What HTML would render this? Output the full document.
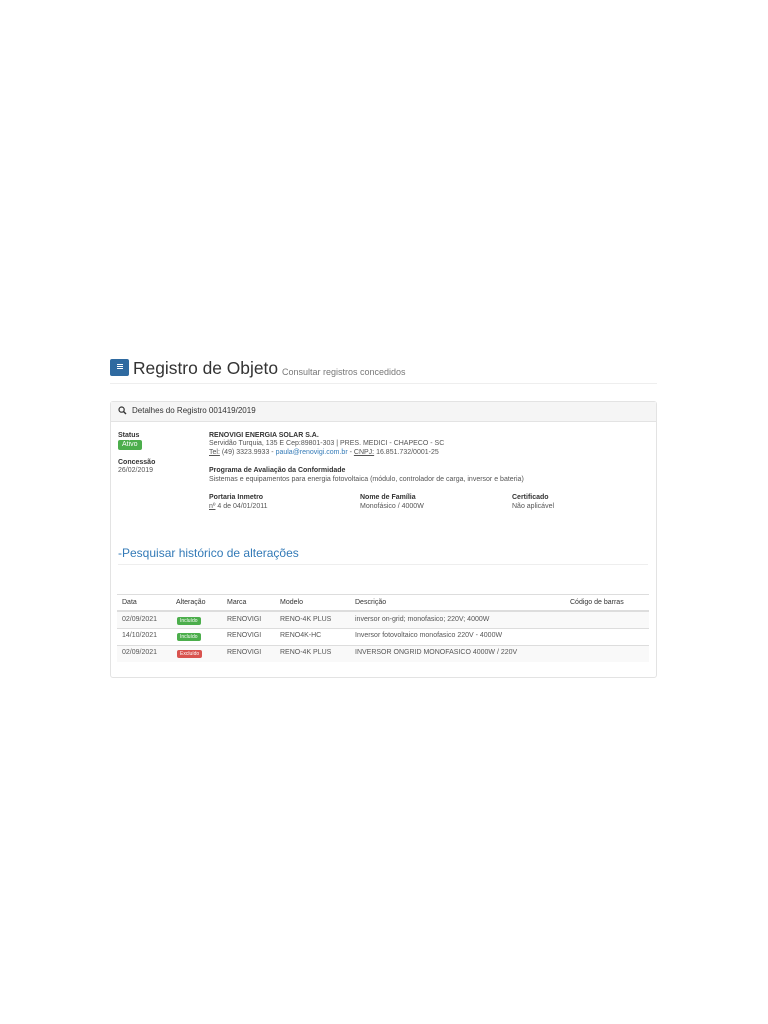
<!DOCTYPE html>
<html><head><meta charset="utf-8"><style>
body{margin:0;width:768px;height:1024px;background:#fff;font-family:"Liberation Sans",sans-serif;position:relative;overflow:hidden;color:#333}
.a{position:absolute;white-space:nowrap}
.s{font-size:7px;color:#555}
.b{font-size:7px;font-weight:bold;color:#333}
.lab{font-size:6px;color:#fff;border-radius:2px;padding:0 3px;line-height:8px}
</style></head><body>
<div class="a" style="left:110px;top:359px;width:19px;height:17px;background:#2f6aa0;border-radius:2px"></div>
<div class="a" style="left:117px;top:364px;width:6px;height:1px;background:#fff;box-shadow:0 2px 0 #fff,0 4px 0 #fff"></div>
<div class="a" style="left:133px;top:358px;font-size:17.4px;color:#333">Registro de Objeto</div>
<div class="a" style="left:282px;top:367px;font-size:9px;color:#777">Consultar registros concedidos</div>
<div class="a" style="left:110px;top:383px;width:547px;height:1px;background:#eee"></div>

<div class="a" style="left:110px;top:401px;width:545px;height:275px;border:1px solid #e3e3e3;border-radius:3px"></div>
<div class="a" style="left:111px;top:402px;width:545px;height:19px;background:#f5f5f5;border-bottom:1px solid #e3e3e3"></div>
<svg class="a" style="left:118px;top:406px" width="9" height="9" viewBox="0 0 9 9"><circle cx="3.6" cy="3.6" r="2.6" fill="none" stroke="#333" stroke-width="1.2"/><path d="M5.5 5.5L8 8" stroke="#333" stroke-width="1.4"/></svg>
<div class="a" style="left:132px;top:406px;font-size:8px;color:#333">Detalhes do Registro 001419/2019</div>

<div class="a b" style="left:118px;top:432px">Status</div>
<div class="a lab" style="left:118px;top:440px;background:#4cae4c;font-size:7px;line-height:10px;padding:0 4px">Ativo</div>
<div class="a b" style="left:118px;top:459px">Concessão</div>
<div class="a s" style="left:118px;top:467px">26/02/2019</div>

<div class="a b" style="left:209px;top:432px">RENOVIGI ENERGIA SOLAR S.A.</div>
<div class="a s" style="left:209px;top:440px">Servidão Turquia, 135 E Cep:89801-303 | PRES. MEDICI - CHAPECO - SC</div>
<div class="a s" style="left:209px;top:449px"><u>Tel:</u> (49) 3323.9933 - <span style="color:#337ab7">paula@renovigi.com.br</span> - <u>CNPJ:</u> 16.851.732/0001-25</div>
<div class="a b" style="left:209px;top:467px">Programa de Avaliação da Conformidade</div>
<div class="a s" style="left:209px;top:476px">Sistemas e equipamentos para energia fotovoltaica (módulo, controlador de carga, inversor e bateria)</div>
<div class="a b" style="left:209px;top:494px">Portaria Inmetro</div>
<div class="a s" style="left:209px;top:503px"><u>nº</u> 4 de 04/01/2011</div>
<div class="a b" style="left:360px;top:494px">Nome de Família</div>
<div class="a s" style="left:360px;top:503px">Monofásico / 4000W</div>
<div class="a b" style="left:512px;top:494px">Certificado</div>
<div class="a s" style="left:512px;top:503px">Não aplicável</div>

<div class="a" style="left:118px;top:546px;font-size:12px;color:#337ab7">-Pesquisar histórico de alterações</div>
<div class="a" style="left:118px;top:564px;width:530px;height:1px;background:#eee"></div>

<div class="a" style="left:117px;top:594px;width:532px;height:1px;background:#ddd"></div>
<div class="a" style="left:117px;top:610px;width:532px;height:2px;background:#ddd"></div>
<div class="a" style="left:117px;top:612px;width:532px;height:16px;background:#f9f9f9"></div>
<div class="a" style="left:117px;top:628px;width:532px;height:1px;background:#ddd"></div>
<div class="a" style="left:117px;top:645px;width:532px;height:1px;background:#ddd"></div>
<div class="a" style="left:117px;top:646px;width:532px;height:16px;background:#f9f9f9"></div>

<div class="a b" style="left:122px;top:599px;font-weight:normal">Data</div>
<div class="a b" style="left:176px;top:599px;font-weight:normal">Alteração</div>
<div class="a b" style="left:227px;top:599px;font-weight:normal">Marca</div>
<div class="a b" style="left:280px;top:599px;font-weight:normal">Modelo</div>
<div class="a b" style="left:355px;top:599px;font-weight:normal">Descrição</div>
<div class="a b" style="left:570px;top:599px;font-weight:normal">Código de barras</div>

<div class="a s" style="left:122px;top:616px">02/09/2021</div>
<div class="a lab" style="left:177px;top:617px;background:#4cae4c;font-size:5px">Incluído</div>
<div class="a s" style="left:227px;top:616px">RENOVIGI</div>
<div class="a s" style="left:280px;top:616px">RENO-4K PLUS</div>
<div class="a s" style="left:355px;top:616px">inversor on-grid; monofasico; 220V; 4000W</div>

<div class="a s" style="left:122px;top:632px">14/10/2021</div>
<div class="a lab" style="left:177px;top:633px;background:#4cae4c;font-size:5px">Incluído</div>
<div class="a s" style="left:227px;top:632px">RENOVIGI</div>
<div class="a s" style="left:280px;top:632px">RENO4K-HC</div>
<div class="a s" style="left:355px;top:632px">Inversor fotovoltaico monofasico 220V - 4000W</div>

<div class="a s" style="left:122px;top:649px">02/09/2021</div>
<div class="a lab" style="left:177px;top:650px;background:#d9534f;font-size:5px">Excluído</div>
<div class="a s" style="left:227px;top:649px">RENOVIGI</div>
<div class="a s" style="left:280px;top:649px">RENO-4K PLUS</div>
<div class="a s" style="left:355px;top:649px">INVERSOR ONGRID MONOFASICO 4000W / 220V</div>
</body></html>
